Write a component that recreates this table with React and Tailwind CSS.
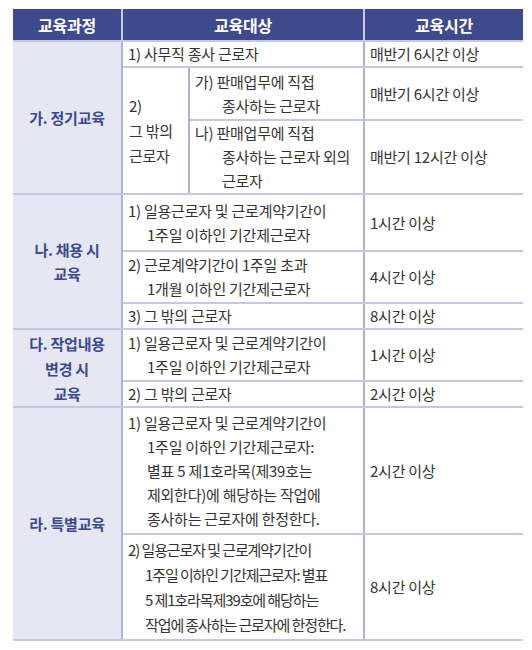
const cell = 'border-2 border-y-[#c6c8e1] border-x-[#aeb0d4] px-[5px] align-middle'
const label = 'border-2 border-l-0 border-y-[#c6c8e1] border-r-[#aeb0d4] bg-[#e6e7f3] text-center align-middle font-bold text-[#3b4a8e]'
const time = 'border-2 border-r-0 border-y-[#c6c8e1] border-l-[#aeb0d4] px-[5px] align-middle'

// first line flush, following lines indented (hanging indent)
function Lines({ lines, indent = 'pl-[19px]' }) {
  return (
    <div>
      {lines.map((l, i) => (
        <div key={i} className={i === 0 ? '' : indent}>{l}</div>
      ))}
    </div>
  )
}

export default function App() {
  return (
    <div className="w-[532px] h-[650px] bg-white pt-[9px] pl-[13px] font-['Noto_Sans_CJK_KR',sans-serif] text-[15px] leading-[24px] tracking-[-0.25px] text-[#333333]">
      <table className="table-fixed border-collapse w-[510px]">
        <colgroup>
          <col className="w-[109px]" />
          <col className="w-[67px]" />
          <col className="w-[175px]" />
          <col className="w-[159px]" />
        </colgroup>
        <thead>
          <tr className="h-[32px] bg-[#3e4a8b] text-white text-[16px]">
            <th className="border-r-2 border-[#c8cae2] font-bold">교육과정</th>
            <th colSpan={2} className="border-x-2 border-[#c8cae2] font-bold">교육대상</th>
            <th className="font-bold">교육시간</th>
          </tr>
        </thead>
        <tbody>
          <tr className="h-[25px]">
            <td rowSpan={3} className={label}>가. 정기교육</td>
            <td colSpan={2} className={cell}>1) 사무직 종사 근로자</td>
            <td className={time}>매반기 6시간 이상</td>
          </tr>
          <tr className="h-[53px]">
            <td rowSpan={2} className={cell + ' pl-[6px] leading-[25px]'}>
              <div>2)</div>
              <div>그 밖의</div>
              <div>근로자</div>
            </td>
            <td className={cell}>
              <Lines lines={['가) 판매업무에 직접', '종사하는 근로자']} indent="pl-[27px]" />
            </td>
            <td className={time}>매반기 6시간 이상</td>
          </tr>
          <tr className="h-[74px]">
            <td className={cell}>
              <Lines lines={['나) 판매업무에 직접', '종사하는 근로자 외의', '근로자']} indent="pl-[27px]" />
            </td>
            <td className={time}>매반기 12시간 이상</td>
          </tr>

          <tr className="h-[57px]">
            <td rowSpan={3} className={label}>
              <div>나. 채용 시</div>
              <div>교육</div>
            </td>
            <td colSpan={2} className={cell}>
              <Lines lines={['1) 일용근로자 및 근로계약기간이', '1주일 이하인 기간제근로자']} />
            </td>
            <td className={time}>1시간 이상</td>
          </tr>
          <tr className="h-[52px]">
            <td colSpan={2} className={cell}>
              <Lines lines={['2) 근로계약기간이 1주일 초과', '1개월 이하인 기간제근로자']} />
            </td>
            <td className={time}>4시간 이상</td>
          </tr>
          <tr className="h-[26px]">
            <td colSpan={2} className={cell}>3) 그 밖의 근로자</td>
            <td className={time}>8시간 이상</td>
          </tr>

          <tr className="h-[52px]">
            <td rowSpan={2} className={label + ' leading-[25px]'}>
              <div>다. 작업내용</div>
              <div>변경 시</div>
              <div>교육</div>
            </td>
            <td colSpan={2} className={cell}>
              <Lines lines={['1) 일용근로자 및 근로계약기간이', '1주일 이하인 기간제근로자']} />
            </td>
            <td className={time}>1시간 이상</td>
          </tr>
          <tr className="h-[25px]">
            <td colSpan={2} className={cell}>2) 그 밖의 근로자</td>
            <td className={time}>2시간 이상</td>
          </tr>

          <tr className="h-[127px]">
            <td rowSpan={2} className={label}>라. 특별교육</td>
            <td colSpan={2} className={cell}>
              <Lines
                lines={[
                  '1) 일용근로자 및 근로계약기간이',
                  '1주일 이하인 기간제근로자:',
                  '별표 5 제1호라목(제39호는',
                  '제외한다)에 해당하는 작업에',
                  '종사하는 근로자에 한정한다.',
                ]}
              />
            </td>
            <td className={time}>2시간 이상</td>
          </tr>
          <tr className="h-[106px]">
            <td colSpan={2} className={cell + ' tracking-[-1.1px] leading-[25px]'}>
              <Lines
                lines={[
                  '2) 일용근로자 및 근로계약기간이',
                  '1주일 이하인 기간제근로자: 별표',
                  '5 제1호라목제39호에 해당하는',
                  '작업에 종사하는 근로자에 한정한다.',
                ]}
                indent="pl-[17px]"
              />
            </td>
            <td className={time}>8시간 이상</td>
          </tr>
        </tbody>
      </table>
    </div>
  )
}
